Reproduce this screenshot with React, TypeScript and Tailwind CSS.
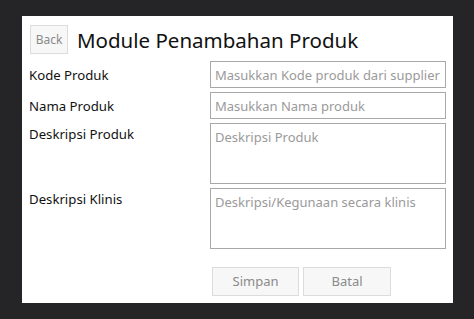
import React from "react";

const font = { fontFamily: '"Noto Sans", "Open Sans", sans-serif' };

const Field = ({ label, placeholder, area }: { label: string; placeholder: string; area?: boolean }) => (
  <>
    <label className={`text-[13.2px] text-[#111] leading-[20px] ${area ? "pt-[1px]" : "self-center"}`}>{label}</label>
    {area ? (
      <textarea
        placeholder={placeholder}
        className="h-[61px] w-[236px] resize-none border border-[#a8a8a8] px-[4px] py-[3px] text-[13px] leading-[20px] outline-none placeholder:text-[#9a9a9a]"
      />
    ) : (
      <input
        placeholder={placeholder}
        className="h-[27px] w-[236px] border border-[#a8a8a8] px-[4px] text-[13px] outline-none placeholder:text-[#9a9a9a]"
      />
    )}
  </>
);

export default function App() {
  return (
    <div className="min-h-[319px] w-[474px] bg-[#252527] pt-[16px] pl-[22px]" style={font}>
      <div className="flex h-[287px] w-[431px] flex-col bg-white pl-[7px] pt-[9px]">
        <div className="flex items-center gap-[9px] pl-[1px]">
          <button className="h-[29px] w-[38px] border border-[#dcdcdc] bg-[#f7f7f7] text-[12px] text-[#8a8a8a]">Back</button>
          <h1 className="text-[20.5px] leading-[28px] text-[#111]">Module Penambahan Produk</h1>
        </div>
        <div className="mt-[7px] grid grid-cols-[181px_236px] gap-y-[4px]">
          <Field label="Kode Produk" placeholder="Masukkan Kode produk dari supplier" />
          <Field label="Nama Produk" placeholder="Masukkan Nama produk" />
          <Field label="Deskripsi Produk" placeholder="Deskripsi Produk" area />
          <Field label="Deskripsi Klinis" placeholder="Deskripsi/Kegunaan secara klinis" area />
        </div>
        <div className="mt-[18px] flex gap-[4px] pl-[183px]">
          <button className="h-[29px] w-[87px] border border-[#dcdcdc] bg-[#f7f7f7] text-[13px] text-[#8a8a8a]">Simpan</button>
          <button className="h-[29px] w-[88px] border border-[#dcdcdc] bg-[#f7f7f7] text-[13px] text-[#8a8a8a]">Batal</button>
        </div>
      </div>
    </div>
  );
}
